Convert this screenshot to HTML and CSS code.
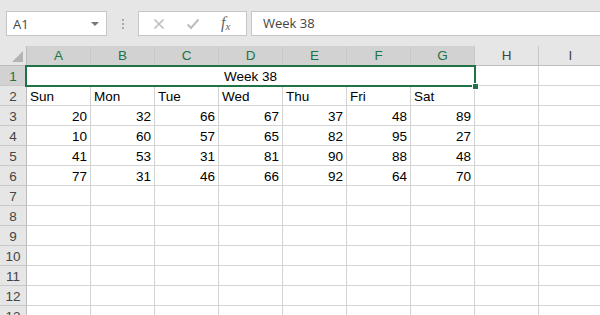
FILE: index.html
```html
<!DOCTYPE html>
<html lang="en">
  <head>
    <meta charset="UTF-8" />
    <title>Week 38 - Excel</title>
    <link rel="stylesheet" href="styles.css">
  </head>
  <body>
    <div class="toolbar">
      <div class="name-box">
        <span>A1</span>
        <span class="caret"></span>
      </div>
      <div class="grip"><i></i><i></i><i></i></div>
      <div class="fx-buttons">
        <svg class="fx-icon" width="12" height="12" viewBox="0 0 12 12">
          <path d="M1.5 1.5 L10.5 10.5 M10.5 1.5 L1.5 10.5" stroke="#bdbdbd" stroke-width="1.6" />
        </svg>
        <svg class="fx-icon" width="14" height="12" viewBox="0 0 14 12">
          <path d="M1.5 6.5 L5 10 L12.5 1.5" stroke="#bdbdbd" stroke-width="2" fill="none" />
        </svg>
        <span class="fx-label">f<span class="fx-sub">x</span></span>
      </div>
      <div class="formula-input">Week 38</div>
    </div>

    <div class="sheet">
      <div class="corner"><span></span></div>
      <div class="col-head active">A</div>
      <div class="col-head active">B</div>
      <div class="col-head active">C</div>
      <div class="col-head active">D</div>
      <div class="col-head active">E</div>
      <div class="col-head active">F</div>
      <div class="col-head active">G</div>
      <div class="col-head">H</div>
      <div class="col-head">I</div>

      <div class="row-head active">1</div>
      <div class="cell merged">Week 38</div>
      <div class="cell"></div>
      <div class="cell"></div>

      <div class="row-head">2</div>
      <div class="cell">Sun</div>
      <div class="cell">Mon</div>
      <div class="cell">Tue</div>
      <div class="cell">Wed</div>
      <div class="cell">Thu</div>
      <div class="cell">Fri</div>
      <div class="cell">Sat</div>
      <div class="cell"></div>
      <div class="cell"></div>

      <div class="row-head">3</div>
      <div class="cell num">20</div>
      <div class="cell num">32</div>
      <div class="cell num">66</div>
      <div class="cell num">67</div>
      <div class="cell num">37</div>
      <div class="cell num">48</div>
      <div class="cell num">89</div>
      <div class="cell"></div>
      <div class="cell"></div>

      <div class="row-head">4</div>
      <div class="cell num">10</div>
      <div class="cell num">60</div>
      <div class="cell num">57</div>
      <div class="cell num">65</div>
      <div class="cell num">82</div>
      <div class="cell num">95</div>
      <div class="cell num">27</div>
      <div class="cell"></div>
      <div class="cell"></div>

      <div class="row-head">5</div>
      <div class="cell num">41</div>
      <div class="cell num">53</div>
      <div class="cell num">31</div>
      <div class="cell num">81</div>
      <div class="cell num">90</div>
      <div class="cell num">88</div>
      <div class="cell num">48</div>
      <div class="cell"></div>
      <div class="cell"></div>

      <div class="row-head">6</div>
      <div class="cell num">77</div>
      <div class="cell num">31</div>
      <div class="cell num">46</div>
      <div class="cell num">66</div>
      <div class="cell num">92</div>
      <div class="cell num">64</div>
      <div class="cell num">70</div>
      <div class="cell"></div>
      <div class="cell"></div>
    </div>

    <script>
      // empty rows 7..13
      const sheet = document.querySelector(".sheet");
      for (let r = 7; r <= 13; r++) {
        const head = document.createElement("div");
        head.className = "row-head";
        head.textContent = r;
        sheet.appendChild(head);
        for (let c = 0; c < 9; c++) {
          const cell = document.createElement("div");
          cell.className = "cell";
          sheet.appendChild(cell);
        }
      }
      // selection box over A1:G1
      const sel = document.createElement("div");
      sel.className = "selection";
      sel.innerHTML = '<span class="handle"></span>';
      sheet.appendChild(sel);
    </script>
  </body>
</html>
```

FILE: styles.css
```css
* {
  margin: 0;
  padding: 0;
  box-sizing: border-box;
}

body {
  width: 600px;
  height: 315px;
  overflow: hidden;
  background-color: #ffffff;
  font-family: "Liberation Sans", Arial, sans-serif;
}

.toolbar {
  height: 46px;
  background-color: #e6e6e6;
  display: flex;
  align-items: flex-start;
  padding: 11px 0 0 6px;
  font-family: "Open Sans", "Liberation Sans", sans-serif;
  font-size: 13px;
  color: #444;
}

.name-box {
  width: 101px;
  height: 25px;
  background-color: #fff;
  border: 1px solid #c6c6c6;
  display: flex;
  align-items: center;
  justify-content: space-between;
  padding: 0 7px 0 6px;
}

.caret {
  width: 0;
  height: 0;
  border-left: 4px solid transparent;
  border-right: 4px solid transparent;
  border-top: 4px solid #777;
}

.grip {
  width: 31px;
  height: 25px;
  display: flex;
  flex-direction: column;
  align-items: center;
  justify-content: center;
  gap: 2px;
}

.grip i {
  width: 2px;
  height: 2px;
  background-color: #a9a9a9;
}

.fx-buttons {
  width: 109px;
  height: 25px;
  background-color: #fff;
  border: 1px solid #c6c6c6;
  display: flex;
  align-items: center;
  padding-left: 14px;
  gap: 21px;
}

.fx-label {
  font-family: "Liberation Serif", serif;
  font-style: italic;
  font-size: 16px;
  color: #666;
  line-height: 16px;
}

.fx-sub {
  font-size: 11px;
  position: relative;
  top: 2px;
}

.formula-input {
  flex: 1;
  height: 25px;
  margin-left: 4px;
  background-color: #fff;
  border: 1px solid #c6c6c6;
  border-right: none;
  padding-left: 11px;
  line-height: 23px;
}

.sheet {
  position: relative;
  display: grid;
  grid-template-columns: 27px repeat(9, 64px);
  grid-auto-rows: 20px;
  font-size: 13.5px;
  color: #000;
}

.corner {
  background-color: #e6e6e6;
  border-right: 1px solid #bdbdbd;
  border-bottom: 1px solid #bdbdbd;
  position: relative;
}

.corner span {
  position: absolute;
  right: 3px;
  bottom: 3px;
  width: 0;
  height: 0;
  border-left: 11px solid transparent;
  border-bottom: 11px solid #b4b4b4;
}

.col-head {
  background-color: #e6e6e6;
  border-right: 1px solid #c8c8c8;
  border-bottom: 1px solid #bdbdbd;
  text-align: center;
  line-height: 19px;
  color: #444;
}

.row-head {
  background-color: #e6e6e6;
  border-right: 1px solid #bdbdbd;
  border-bottom: 1px solid #c8c8c8;
  text-align: center;
  line-height: 21px;
  color: #444;
}

.col-head.active,
.row-head.active {
  background-color: #d2d2d2;
  color: #217346;
}

.cell {
  border-right: 1px solid #d4d4d4;
  border-bottom: 1px solid #d4d4d4;
  padding: 0 3px;
  line-height: 21px;
  white-space: nowrap;
  overflow: hidden;
}

.cell.num {
  text-align: right;
}

.cell.merged {
  grid-column: span 7;
  text-align: center;
}

.selection {
  position: absolute;
  left: 25px;
  top: 19px;
  width: 451px;
  height: 22px;
  border: 2px solid #217346;
}

.handle {
  position: absolute;
  right: -5px;
  bottom: -5px;
  width: 7px;
  height: 7px;
  background-color: #217346;
  border: 1px solid #fff;
}
```
